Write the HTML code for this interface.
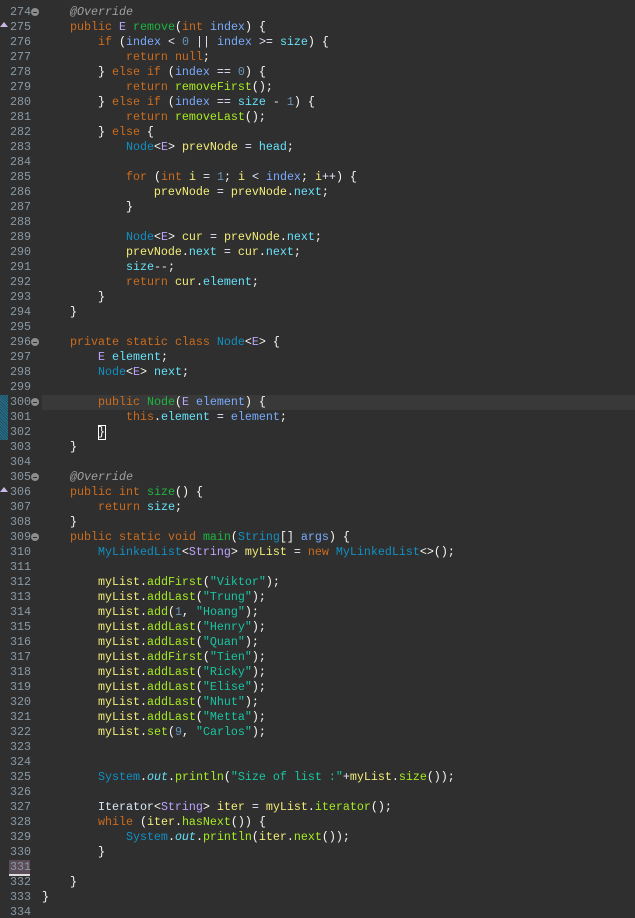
<!DOCTYPE html>
<html><head><meta charset="utf-8">
<style>
html,body{margin:0;padding:0;background:#2f2f2f;width:635px;height:918px;overflow:hidden}
#ed{position:relative;width:635px;height:918px;font-family:"Liberation Mono",monospace;font-size:11.67px;line-height:15px;color:#f9faf4}
.ln{position:absolute;left:0;width:31px;text-align:right;color:#8a9aa6;white-space:pre}
.code{position:absolute;left:42px;white-space:pre}
.fold{position:absolute;left:31px;width:8px;height:8px;border-radius:50%;background:#8c8c8c}
.fold:after{content:"";position:absolute;left:2px;top:3.5px;width:4px;height:1px;background:#2f2f2f}
.tri{position:absolute;left:0;width:0;height:0;border-left:4px solid transparent;border-right:4px solid transparent;border-bottom:5px solid #c8b8e8}
.k{color:#cc6c1d}.m{color:#1eb540}.c{color:#a7ec21}.p{color:#79abff}.f{color:#66e1f8}.t{color:#1290c3}.v{color:#f3ec79}.s{color:#17c6a3}.n{color:#6897bb}.a{color:#a0a0a0;font-style:italic}.g{color:#bfa4fe}.o{color:#e6e6fa}.w{color:#d9e8f7}.i{font-style:italic}
</style></head><body><div id="ed">
<div style="position:absolute;left:42px;top:395px;width:593px;height:15px;background:#393939"></div>
<div style="position:absolute;left:0;top:395px;width:8px;height:45px;background:repeating-linear-gradient(45deg,#2a6f8a 0 1px,#1e4f63 1px 2px)"></div>
<div style="position:absolute;left:9px;top:860px;width:21px;height:14px;background:#5a4b57;border-bottom:2px solid #ddd"></div>
<div style="position:absolute;left:98px;top:425px;width:6px;height:13px;border:1px solid #fff"></div>
<div class="fold" style="top:8px"></div><div class="fold" style="top:338px"></div><div class="fold" style="top:398px"></div><div class="fold" style="top:473px"></div><div class="fold" style="top:533px"></div>
<div class="tri" style="top:22px"></div><div class="tri" style="top:487px"></div>
<div class="ln" style="top:5px">274
275
276
277
278
279
280
281
282
283
284
285
286
287
288
289
290
291
292
293
294
295
296
297
298
299
300
301
302
303
304
305
306
307
308
309
310
311
312
313
314
315
316
317
318
319
320
321
322
323
324
325
326
327
328
329
330
331
332
333
334</div>
<div class="code" style="top:5px">    <span class="a">@Override</span>
    <span class="k">public</span> <span class="g">E</span> <span class="m">remove</span>(<span class="k">int</span> <span class="p">index</span>) {
        <span class="k">if</span> (<span class="p">index</span> <span class="o">&lt;</span> <span class="n">0</span> <span class="o">||</span> <span class="p">index</span> <span class="o">&gt;=</span> <span class="f">size</span>) {
            <span class="k">return</span> <span class="k">null</span>;
        } <span class="k">else</span> <span class="k">if</span> (<span class="p">index</span> <span class="o">==</span> <span class="n">0</span>) {
            <span class="k">return</span> <span class="c">removeFirst</span>();
        } <span class="k">else</span> <span class="k">if</span> (<span class="p">index</span> <span class="o">==</span> <span class="f">size</span> <span class="o">-</span> <span class="n">1</span>) {
            <span class="k">return</span> <span class="c">removeLast</span>();
        } <span class="k">else</span> {
            <span class="t">Node</span>&lt;<span class="g">E</span>&gt; <span class="v">prevNode</span> <span class="o">=</span> <span class="f">head</span>;

            <span class="k">for</span> (<span class="k">int</span> <span class="v">i</span> <span class="o">=</span> <span class="n">1</span>; <span class="v">i</span> <span class="o">&lt;</span> <span class="p">index</span>; <span class="v">i</span><span class="o">++</span>) {
                <span class="v">prevNode</span> <span class="o">=</span> <span class="v">prevNode</span>.<span class="f">next</span>;
            }

            <span class="t">Node</span>&lt;<span class="g">E</span>&gt; <span class="v">cur</span> <span class="o">=</span> <span class="v">prevNode</span>.<span class="f">next</span>;
            <span class="v">prevNode</span>.<span class="f">next</span> <span class="o">=</span> <span class="v">cur</span>.<span class="f">next</span>;
            <span class="f">size</span><span class="o">--</span>;
            <span class="k">return</span> <span class="v">cur</span>.<span class="f">element</span>;
        }
    }

    <span class="k">private</span> <span class="k">static</span> <span class="k">class</span> <span class="t">Node</span>&lt;<span class="g">E</span>&gt; {
        <span class="g">E</span> <span class="f">element</span>;
        <span class="t">Node</span>&lt;<span class="g">E</span>&gt; <span class="f">next</span>;

        <span class="k">public</span> <span class="m">Node</span>(<span class="g">E</span> <span class="p">element</span>) {
            <span class="k">this</span>.<span class="f">element</span> <span class="o">=</span> <span class="p">element</span>;
        }
    }

    <span class="a">@Override</span>
    <span class="k">public</span> <span class="k">int</span> <span class="m">size</span>() {
        <span class="k">return</span> <span class="f">size</span>;
    }
    <span class="k">public</span> <span class="k">static</span> <span class="k">void</span> <span class="m">main</span>(<span class="t">String</span>[] <span class="p">args</span>) {
        <span class="t">MyLinkedList</span>&lt;<span class="g">String</span>&gt; <span class="v">myList</span> <span class="o">=</span> <span class="k">new</span> <span class="t">MyLinkedList</span>&lt;&gt;();

        <span class="v">myList</span>.<span class="c">addFirst</span>(<span class="s">"Viktor"</span>);
        <span class="v">myList</span>.<span class="c">addLast</span>(<span class="s">"Trung"</span>);
        <span class="v">myList</span>.<span class="c">add</span>(<span class="n">1</span>, <span class="s">"Hoang"</span>);
        <span class="v">myList</span>.<span class="c">addLast</span>(<span class="s">"Henry"</span>);
        <span class="v">myList</span>.<span class="c">addLast</span>(<span class="s">"Quan"</span>);
        <span class="v">myList</span>.<span class="c">addFirst</span>(<span class="s">"Tien"</span>);
        <span class="v">myList</span>.<span class="c">addLast</span>(<span class="s">"Ricky"</span>);
        <span class="v">myList</span>.<span class="c">addLast</span>(<span class="s">"Elise"</span>);
        <span class="v">myList</span>.<span class="c">addLast</span>(<span class="s">"Nhut"</span>);
        <span class="v">myList</span>.<span class="c">addLast</span>(<span class="s">"Metta"</span>);
        <span class="v">myList</span>.<span class="c">set</span>(<span class="n">9</span>, <span class="s">"Carlos"</span>);


        <span class="t">System</span>.<span class="f i">out</span>.<span class="c">println</span>(<span class="s">"Size of list :"</span><span class="o">+</span><span class="v">myList</span>.<span class="c">size</span>());

        <span class="w">Iterator</span>&lt;<span class="g">String</span>&gt; <span class="v">iter</span> <span class="o">=</span> <span class="v">myList</span>.<span class="c">iterator</span>();
        <span class="k">while</span> (<span class="v">iter</span>.<span class="c">hasNext</span>()) {
            <span class="t">System</span>.<span class="f i">out</span>.<span class="c">println</span>(<span class="v">iter</span>.<span class="c">next</span>());
        }

    }
}
</div>
</div></body></html>
